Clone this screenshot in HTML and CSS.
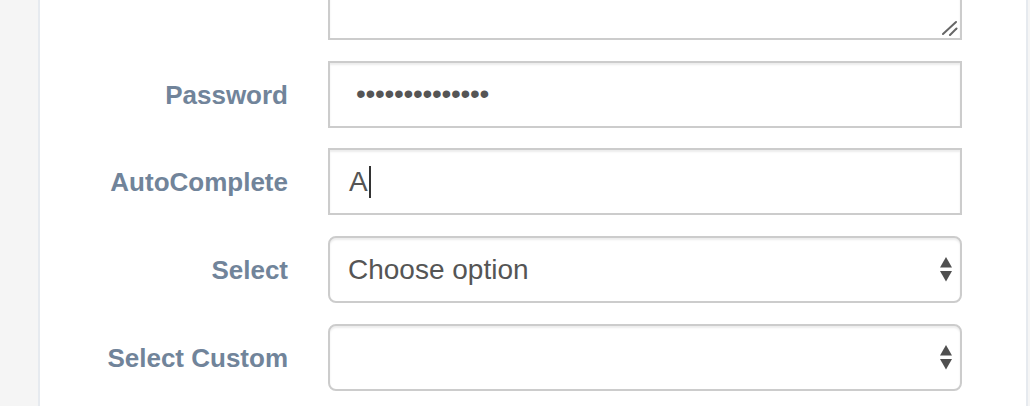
FILE: index.html
```html
<!DOCTYPE html>
<html lang="en">
<head>
<meta charset="utf-8">
<title>Form</title>
<link rel="stylesheet" href="styles.css">
</head>
<body>
<div class="panel">
  <form class="form">
    <div class="label" aria-hidden="true"></div>
    <div class="ta-wrap">
      <textarea id="ta" class="textarea" aria-label="Textarea"></textarea>
      <svg class="grip" width="16" height="16" viewBox="0 0 16 16" aria-hidden="true">
        <line x1="1" y1="14" x2="14" y2="2" stroke="#666" stroke-width="2" stroke-linecap="round"/>
        <line x1="8" y1="15" x2="14.5" y2="8.5" stroke="#666" stroke-width="2" stroke-linecap="round"/>
      </svg>
    </div>

    <label class="label" for="pw">Password</label>
    <input id="pw" class="control password" type="password" value="abcdefghijklmn">

    <label class="label" for="ac">AutoComplete</label>
    <div class="fake-input" id="ac">A<span class="caret"></span></div>

    <label class="label" for="sel">Select</label>
    <div class="select-wrap">
      <select id="sel" class="control select">
        <option>Choose option</option>
        <option>Option 1</option>
      </select>
      <svg class="arrows" width="12" height="25" viewBox="0 0 12 25" aria-hidden="true">
        <polygon points="6,0 12,10.5 0,10.5" fill="#4f4f4f"/>
        <polygon points="0,14 12,14 6,24.5" fill="#4f4f4f"/>
      </svg>
    </div>

    <label class="label" for="selc">Select Custom</label>
    <div class="select-wrap">
      <select id="selc" class="control select">
        <option></option>
        <option>Option 1</option>
      </select>
      <svg class="arrows" width="12" height="25" viewBox="0 0 12 25" aria-hidden="true">
        <polygon points="6,0 12,10.5 0,10.5" fill="#4f4f4f"/>
        <polygon points="0,14 12,14 6,24.5" fill="#4f4f4f"/>
      </svg>
    </div>
  </form>
</div>
</body>
</html>
```

FILE: styles.css
```css
html, body {
  margin: 0;
  padding: 0;
}
body {
  background: #f5f5f5;
  height: 406px;
  overflow: hidden;
  font-family: "Liberation Sans", Arial, Helvetica, sans-serif;
}
.panel {
  display: flow-root;
  margin-left: 38px;
  width: 986px;
  height: 406px;
  background: #ffffff;
  border-left: 2px solid #e6eaef;
  border-right: 2px solid #e6eaef;
}
.form {
  display: grid;
  grid-template-columns: 248px 634px;
  column-gap: 40px;
  row-gap: 20.67px;
  margin-top: -80px;
}
.label {
  align-self: center;
  text-align: right;
  font-size: 26px;
  font-weight: 700;
  color: #71849a;
  padding-top: 2px;
}
.ta-wrap,
.select-wrap {
  position: relative;
}
.textarea {
  display: block;
  box-sizing: border-box;
  width: 100%;
  height: 120px;
  margin: 0;
  border: 2px solid #cccccc;
  border-radius: 0;
  resize: none;
  background: #fff;
  box-shadow: inset 0 2px 2px rgba(0, 0, 0, 0.075);
}
.grip {
  position: absolute;
  right: 4px;
  bottom: 4px;
}
.control,
.fake-input {
  display: block;
  box-sizing: border-box;
  width: 100%;
  height: 67px;
  margin: 0;
  border: 2px solid #cccccc;
  border-radius: 0;
  background: #ffffff;
  box-shadow: inset 0 2px 2px rgba(0, 0, 0, 0.075);
  font-family: "Liberation Sans", Arial, Helvetica, sans-serif;
  font-size: 28px;
  color: #555555;
  padding: 0 19px;
  outline: none;
}
.password {
  padding-left: 26px;
  letter-spacing: -0.3px;
}
.fake-input {
  display: flex;
  align-items: center;
  padding-left: 19px;
}
.caret {
  display: inline-block;
  width: 2px;
  height: 32px;
  background: #333333;
  margin-left: 1px;
}
.select {
  -webkit-appearance: none;
  appearance: none;
  border-radius: 8px;
  padding: 0 50px 0 18px;
}
.arrows {
  position: absolute;
  right: 10px;
  top: 21px;
  pointer-events: none;
}
```
